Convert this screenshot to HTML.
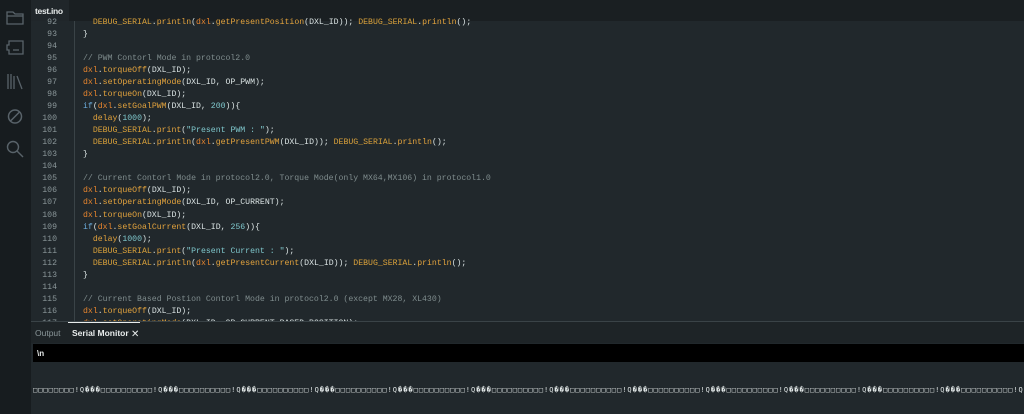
<!DOCTYPE html>
<html><head><meta charset="utf-8"><style>
*{margin:0;padding:0;box-sizing:border-box}
body{width:1024px;height:414px;overflow:hidden;background:#21282c;font-family:"Liberation Sans",sans-serif;position:relative}
#side{position:absolute;left:0;top:0;width:31px;height:414px;background:#171c1f}
#side svg{position:absolute;left:6px}
#top{position:absolute;left:31px;top:0;right:0;height:21px;background:#1a1f22}
#tab{position:absolute;left:31px;top:0;width:38px;height:21px;background:#20262a;color:#e8ecec;font-size:8.5px;font-weight:bold;padding:6px 0 0 4px;letter-spacing:-0.3px}
#code{position:absolute;left:31px;top:17px;right:0;height:305px;overflow:hidden;font-family:"Liberation Mono",monospace;font-size:8.2px}
.l{height:12.04px;line-height:12.04px;white-space:pre;position:relative}
.n{position:absolute;left:0;width:26px;text-align:right;color:#8a9699}
.c{position:absolute;left:52px;color:#dae3e3}
#gut{position:absolute;left:74px;top:21px;width:1px;height:301px;background:#3a4347}
.o{color:#e8852e}.m{color:#e3a33d}.k{color:#6aa8d8}.s{color:#7fc7cc}.g{color:#7f8c8d}.d{color:#d8a03a}
#panel{position:absolute;left:31px;top:321px;right:0;bottom:0;background:#21282c;border-top:1px solid #3a4347}
#ptabs{height:21px;background:#1e2427;position:relative;font-size:8.5px}
#ptabs span{position:absolute;top:6px}
#inp{position:absolute;left:2px;right:0;top:22px;height:18px;background:#000;color:#e8ecec;font-size:8px;font-weight:bold;padding:5px 0 0 4px}
#out{position:absolute;left:33px;top:385px;width:991px;overflow:hidden;white-space:nowrap;color:#dfe5e5;font-family:"DejaVu Sans Mono",monospace;font-size:7px;letter-spacing:1px;line-height:10px}
</style></head><body>
<div id="side">
<svg style="top:10px" width="18" height="15" viewBox="0 0 18 15" fill="none" stroke="#59636a" stroke-width="1.3"><path d="M1 2h6l2 2h8v10H1z"/><path d="M1 6h16"/></svg>
<svg style="top:40px" width="18" height="15" viewBox="0 0 18 15" fill="none" stroke="#59636a" stroke-width="1.3"><path d="M3 1h14v13H3v-4H1V5h2z"/><path d="M7 10h6"/></svg>
<svg style="top:73px" width="18" height="17" viewBox="0 0 18 17" fill="none" stroke="#59636a" stroke-width="1.3"><path d="M2 1v15M5 1v15M8 3v13M11 3l5 13"/></svg>
<svg style="top:108px" width="18" height="17" viewBox="0 0 18 17" fill="none" stroke="#59636a" stroke-width="1.5"><circle cx="9" cy="8.5" r="6.5"/><path d="M4.5 13l9-9"/></svg>
<svg style="top:140px" width="18" height="18" viewBox="0 0 18 18" fill="none" stroke="#59636a" stroke-width="1.4"><circle cx="7" cy="7" r="5.5"/><path d="M11 11l6 6"/></svg>
</div>
<div id="top"></div>
<div id="tab">test.ino</div>
<div id="code">
<div class="l"><span class="n">92</span><span class="c">  <span class="d">DEBUG_SERIAL</span>.<span class="m">println</span>(<span class="o">dxl</span>.<span class="m">getPresentPosition</span>(DXL_ID)); <span class="d">DEBUG_SERIAL</span>.<span class="m">println</span>();</span></div>
<div class="l"><span class="n">93</span><span class="c">}</span></div>
<div class="l"><span class="n">94</span><span class="c"></span></div>
<div class="l"><span class="n">95</span><span class="c g">// PWM Contorl Mode in protocol2.0</span></div>
<div class="l"><span class="n">96</span><span class="c"><span class="o">dxl</span>.<span class="m">torqueOff</span>(DXL_ID);</span></div>
<div class="l"><span class="n">97</span><span class="c"><span class="o">dxl</span>.<span class="m">setOperatingMode</span>(DXL_ID, OP_PWM);</span></div>
<div class="l"><span class="n">98</span><span class="c"><span class="o">dxl</span>.<span class="m">torqueOn</span>(DXL_ID);</span></div>
<div class="l"><span class="n">99</span><span class="c"><span class="k">if</span>(<span class="o">dxl</span>.<span class="m">setGoalPWM</span>(DXL_ID, <span class="s">200</span>)){</span></div>
<div class="l"><span class="n">100</span><span class="c">  <span class="m">delay</span>(<span class="s">1000</span>);</span></div>
<div class="l"><span class="n">101</span><span class="c">  <span class="d">DEBUG_SERIAL</span>.<span class="m">print</span>(<span class="s">"Present PWM : "</span>);</span></div>
<div class="l"><span class="n">102</span><span class="c">  <span class="d">DEBUG_SERIAL</span>.<span class="m">println</span>(<span class="o">dxl</span>.<span class="m">getPresentPWM</span>(DXL_ID)); <span class="d">DEBUG_SERIAL</span>.<span class="m">println</span>();</span></div>
<div class="l"><span class="n">103</span><span class="c">}</span></div>
<div class="l"><span class="n">104</span><span class="c"></span></div>
<div class="l"><span class="n">105</span><span class="c g">// Current Contorl Mode in protocol2.0, Torque Mode(only MX64,MX106) in protocol1.0</span></div>
<div class="l"><span class="n">106</span><span class="c"><span class="o">dxl</span>.<span class="m">torqueOff</span>(DXL_ID);</span></div>
<div class="l"><span class="n">107</span><span class="c"><span class="o">dxl</span>.<span class="m">setOperatingMode</span>(DXL_ID, OP_CURRENT);</span></div>
<div class="l"><span class="n">108</span><span class="c"><span class="o">dxl</span>.<span class="m">torqueOn</span>(DXL_ID);</span></div>
<div class="l"><span class="n">109</span><span class="c"><span class="k">if</span>(<span class="o">dxl</span>.<span class="m">setGoalCurrent</span>(DXL_ID, <span class="s">256</span>)){</span></div>
<div class="l"><span class="n">110</span><span class="c">  <span class="m">delay</span>(<span class="s">1000</span>);</span></div>
<div class="l"><span class="n">111</span><span class="c">  <span class="d">DEBUG_SERIAL</span>.<span class="m">print</span>(<span class="s">"Present Current : "</span>);</span></div>
<div class="l"><span class="n">112</span><span class="c">  <span class="d">DEBUG_SERIAL</span>.<span class="m">println</span>(<span class="o">dxl</span>.<span class="m">getPresentCurrent</span>(DXL_ID)); <span class="d">DEBUG_SERIAL</span>.<span class="m">println</span>();</span></div>
<div class="l"><span class="n">113</span><span class="c">}</span></div>
<div class="l"><span class="n">114</span><span class="c"></span></div>
<div class="l"><span class="n">115</span><span class="c g">// Current Based Postion Contorl Mode in protocol2.0 (except MX28, XL430)</span></div>
<div class="l"><span class="n">116</span><span class="c"><span class="o">dxl</span>.<span class="m">torqueOff</span>(DXL_ID);</span></div>
<div class="l"><span class="n">117</span><span class="c"><span class="o">dxl</span>.<span class="m">setOperatingMode</span>(DXL_ID, OP_CURRENT_BASED_POSITION);</span></div>
</div>
<div id="gut"></div>
<div id="panel">
<div id="ptabs"><span style="left:4px;color:#8a9699">Output</span><span style="left:41px;color:#e8ecec;font-weight:bold">Serial Monitor <span style="font-weight:normal;font-size:10px;position:relative;top:1px">✕</span></span><div style="position:absolute;left:37px;top:0;width:72px;height:1px;background:#e8ecec"></div></div>
<div id="inp">\n</div>
</div>
<div id="out">□□□□□□□□!Q���□□□□□□□□□□!Q���□□□□□□□□□□!Q���□□□□□□□□□□!Q���□□□□□□□□□□!Q���□□□□□□□□□□!Q���□□□□□□□□□□!Q���□□□□□□□□□□!Q���□□□□□□□□□□!Q���□□□□□□□□□□!Q���□□□□□□□□□□!Q���□□□□□□□□□□!Q���□□□□□□□□□□!Q���□□□□□□□□□□!Q���</div>
</body></html>
